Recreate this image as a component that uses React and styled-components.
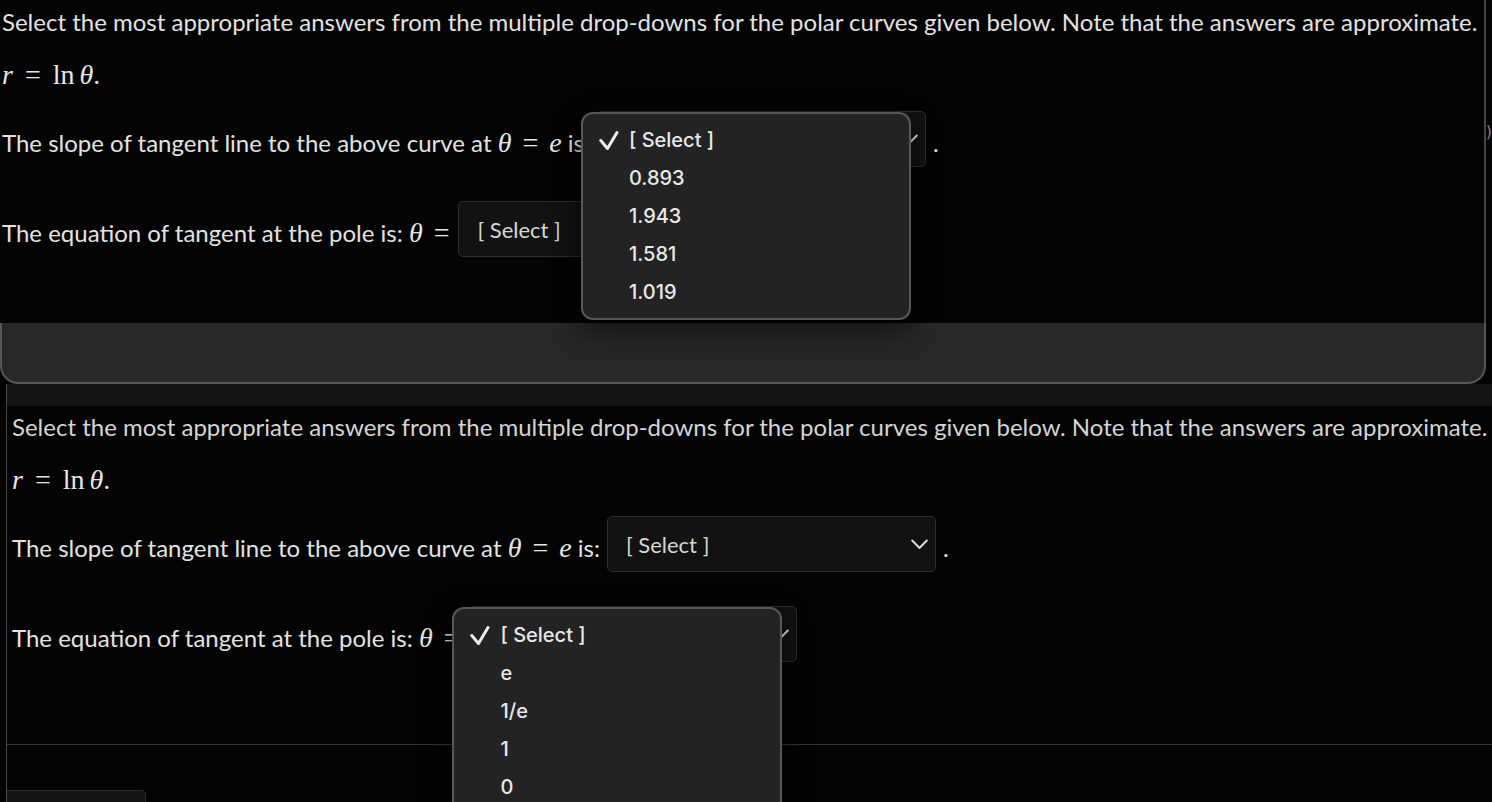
import React from 'react';
import styled, { createGlobalStyle } from 'styled-components';

const Global = createGlobalStyle`
  html, body { margin: 0; padding: 0; background: #040404; }
  body { font-family: Lato, "Noto Sans", sans-serif; color: #e2e2e2; overflow: hidden; }
  * { box-sizing: border-box; }
`;

const Page = styled.div`
  position: relative;
  width: 1492px;
  height: 802px;
  overflow: hidden;
  background: #040404;
`;

const Upper = styled.div`
  width: 1486px;
`;

const TopSection = styled.section`
  height: 323px;
  border-right: 2px solid #474747;
  padding: 1px 0 0 2px;
`;

const Panel = styled.div`
  height: 61px;
  background: #282828;
  border: 2px solid #565656;
  border-top: none;
  border-radius: 0 0 18px 18px;
`;

const Card = styled.section`
  margin-left: 6px;
  border-left: 1px solid #4a4a4a;
  height: 430px;
`;

const CardHeader = styled.div`
  height: 22px;
  background: #151515;
`;

const CardBody = styled.div`
  padding-left: 5px;
`;

const Divider = styled.div`
  margin-top: 82px;
  height: 1px;
  background: #343434;
`;

const FooterButton = styled.div`
  margin-top: 45px;
  width: 139px;
  height: 40px;
  background: #141414;
  border: 1px solid #2c2c2c;
  border-left: none;
  border-radius: 0 5px 0 0;
`;

const Prompt = styled.p`
  margin: 0;
  font-size: 24px;
  line-height: 41px;
  color: ${p => p.$dim ? '#d4d4d4' : '#e2e2e2'};
  white-space: nowrap;
`;

const MathLine = styled.div`
  font-family: "Liberation Serif", "DejaVu Serif", serif;
  font-size: 28px;
  line-height: 65px;
  color: #e6e6e6;
`;

const I = styled.span`
  font-style: italic;
  font-family: "Liberation Serif", "DejaVu Serif", serif;
`;

const Op = styled.span`
  margin-left: ${p => p.$m ?? 11}px;
  margin-right: ${p => p.$r ?? p.$m ?? 11}px;
`;

const Thin = styled.span`
  margin-left: 5px;
`;

const InlineMath = styled.span`
  font-family: "Liberation Serif", "DejaVu Serif", serif;
  font-size: 28px;
  line-height: 1;
  color: #e6e6e6;
`;

const Row = styled.div`
  display: flex;
  align-items: flex-start;
  height: 56px;
  margin-top: ${p => p.$mt}px;
`;

const Label = styled.span`
  font-size: 24px;
  line-height: 64px;
  color: #e2e2e2;
  white-space: nowrap;
`;

const SelectWrap = styled.div`
  position: relative;
  margin-left: ${p => p.$ml}px;
`;

const SelectBox = styled.div`
  display: flex;
  align-items: center;
  justify-content: space-between;
  width: 329px;
  height: 56px;
  padding: 0 7px 0 18px;
  background: #121212;
  border: 1px solid #2e2e2e;
  border-radius: 5px;
  font-size: 22px;
  color: #d6d6d6;
`;

const Dot = styled.span`
  font-size: 24px;
  line-height: 64px;
  margin-left: 7px;
  color: #e2e2e2;
`;

const Menu = styled.ul`
  position: absolute;
  left: -16px;
  top: 1px;
  z-index: 5;
  width: 330px;
  margin: 0;
  padding: 7px 0;
  list-style: none;
  background: #232323;
  border: 2px solid #575757;
  border-radius: 12px;
  box-shadow: 0 10px 30px rgba(0, 0, 0, 0.6);
  font-family: Inter, "Liberation Sans", sans-serif;
  font-weight: 500;
  font-size: 20px;
  color: #e8e8e8;
`;

const MenuItem = styled.li`
  display: flex;
  align-items: center;
  height: 38px;
  padding-left: 16px;
`;

const CheckSlot = styled.span`
  display: inline-flex;
  width: 30px;
  height: 22px;
  align-items: center;
`;

const EdgeGlyph = styled.span`
  position: absolute;
  left: 1486px;
  top: 123px;
  font-family: "DejaVu Sans", sans-serif;
  font-size: 15px;
  color: #8a8a8a;
`;

const Check = () => (
  <svg width="20" height="21" viewBox="0 0 20 21" fill="none">
    <polyline points="1.8,10.5 8.5,18.5 18,2.5" stroke="#ececec" strokeWidth="3" strokeLinecap="round" strokeLinejoin="round" />
  </svg>
);

const Chevron = () => (
  <svg width="17" height="11" viewBox="0 0 17 11" fill="none">
    <polyline points="1.2,1.5 8.5,9 15.8,1.5" stroke="#dcdcdc" strokeWidth="2" strokeLinecap="round" strokeLinejoin="round" />
  </svg>
);

const Dropdown = ({ ml, open, options }) => (
  <SelectWrap $ml={ml}>
    <SelectBox>
      <span>[ Select ]</span>
      <Chevron />
    </SelectBox>
    {open && (
      <Menu>
        {options.map((o, i) => (
          <MenuItem key={o}>
            <CheckSlot>{i === 0 && <Check />}</CheckSlot>
            {o}
          </MenuItem>
        ))}
      </Menu>
    )}
  </SelectWrap>
);

const slopeOptions = ['[ Select ]', '0.893', '1.943', '1.581', '1.019'];
const poleOptions = ['[ Select ]', 'e', '1/e', '1', '0'];

const Question = ({ dim, openSlope, openPole }) => (
  <>
    <Prompt $dim={dim}>
      Select the most appropriate answers from the multiple drop-downs for the polar curves given below. Note that the answers are approximate.
    </Prompt>
    <MathLine>
      <I>r</I>
      <Op $m={12}>=</Op>
      ln<Thin />
      <I>θ</I>.
    </MathLine>
    <Row $mt={4}>
      <Label>
        The slope of tangent line to the above curve at{' '}
        <InlineMath>
          <I>θ</I>
          <Op>=</Op>
          <I>e</I>
        </InlineMath>{' '}
        is:
      </Label>
      <Dropdown ml={7} open={openSlope} options={slopeOptions} />
      <Dot>.</Dot>
    </Row>
    <Row $mt={34}>
      <Label>
        The equation of tangent at the pole is:{' '}
        <InlineMath>
          <I>θ</I>
          <Op $r={0}>=</Op>
        </InlineMath>
      </Label>
      <Dropdown ml={9} open={openPole} options={poleOptions} />
    </Row>
  </>
);

export default function App() {
  return (
    <Page>
      <Global />
      <Upper>
        <TopSection>
          <Question openSlope />
        </TopSection>
        <Panel />
      </Upper>
      <Card>
        <CardHeader />
        <CardBody>
          <Question dim openPole />
        </CardBody>
        <Divider />
        <FooterButton />
      </Card>
      <EdgeGlyph>)</EdgeGlyph>
    </Page>
  );
}
